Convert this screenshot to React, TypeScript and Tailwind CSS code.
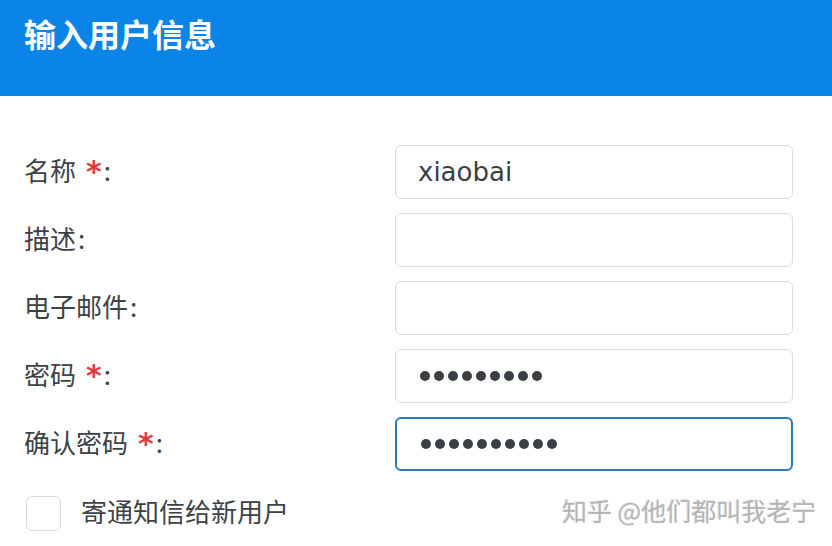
import type { ReactNode } from "react";

const CJK = "font-['Noto_Sans_CJK_SC',sans-serif]";

function Row({ label, required, children }: { label: string; required?: boolean; children: ReactNode }) {
  return (
    <div className="flex items-center">
      <div className={`flex w-[371px] shrink-0 -translate-y-[3px] items-center text-[26px] text-[#3d4246] ${CJK}`}>
        <span>{label}</span>
        {required && (
          <span className="ml-[10px] translate-y-[3px] font-['DejaVu_Sans',sans-serif] text-[30px] font-bold leading-none text-[#e03a3e]">
            *
          </span>
        )}
        <span className="ml-[2px]">:</span>
      </div>
      {children}
    </div>
  );
}

function Field({ value, dots, focused }: { value?: string; dots?: number; focused?: boolean }) {
  const border = focused ? "border-2 border-[#2a7bc0]" : "border-[1.5px] border-[#d6dce1]";
  if (dots) {
    return (
      <div className={`flex h-[54px] w-[398px] items-center gap-[4px] rounded-[6px] bg-white pl-[24px] ${border}`}>
        {Array.from({ length: dots }).map((_, i) => (
          <span key={i} className="h-[10px] w-[10px] rounded-full bg-[#3a3f46]" />
        ))}
      </div>
    );
  }
  return (
    <input
      readOnly
      type="text"
      defaultValue={value ?? ""}
      className={`h-[54px] w-[398px] rounded-[6px] bg-white pl-[22px] font-['DejaVu_Sans',sans-serif] text-[26px] text-[#3a3f44] outline-none ${border}`}
    />
  );
}

export default function App() {
  return (
    <div className="relative h-[546px] w-[832px] overflow-hidden bg-white">
      <header className="h-[96px] bg-[#0a84e6] px-6 pt-[10px]">
        <h1 className={`text-[32px] font-bold leading-[46px] text-white ${CJK}`}>输入用户信息</h1>
      </header>

      <main className="flex flex-col gap-[14px] px-6 pt-[49px]">
        <Row label="名称" required>
          <Field value="xiaobai" />
        </Row>
        <Row label="描述">
          <Field />
        </Row>
        <Row label="电子邮件">
          <Field />
        </Row>
        <Row label="密码" required>
          <Field dots={9} />
        </Row>
        <Row label="确认密码" required>
          <Field dots={10} focused />
        </Row>

        <label className="mt-[9px] flex items-center">
          <span className="ml-[2px] h-[35px] w-[35px] rounded-[6px] border-[1.5px] border-[#d6dce1] bg-white" />
          <span className={`ml-[20px] -translate-y-[3px] text-[26px] text-[#3d4246] ${CJK}`}>寄通知信给新用户</span>
        </label>
      </main>

      {/* watermark */}
      <div
        className={`absolute left-[562px] top-[492px] text-[25px] text-[#b4b4b4] [text-shadow:1px_1px_0_#fff,-1px_-1px_0_#e8e8e8] ${CJK}`}
      >
        知乎 @他们都叫我老宁
      </div>
    </div>
  );
}
